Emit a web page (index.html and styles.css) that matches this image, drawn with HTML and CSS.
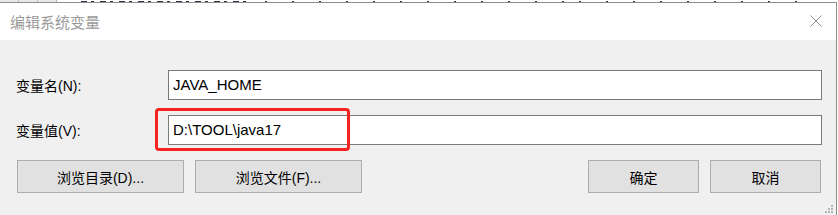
FILE: index.html
```
<!doctype html>
<html lang="zh-CN">
<head>
<meta charset="utf-8">
<title>编辑系统变量</title>
<link rel="stylesheet" href="styles.css">
</head>
<body>
<!-- bottom edge of the window behind the dialog -->
<div class="behind">
  <span class="cell"></span><span class="cell"></span><span class="cell"></span>
  <span class="ink" style="width:170px"></span>
  <span class="dots" style="width:300px"></span>
  <span class="dots" style="width:220px"></span>
</div>

<div class="dialog">
  <div class="titlebar">
    <span class="title">编辑系统变量</span>
    <svg class="close" width="12" height="12" viewBox="0 0 12 12">
      <path d="M0.5 0.5 L11.5 11.5 M11.5 0.5 L0.5 11.5" stroke="#8c8c8c" stroke-width="1" fill="none"/>
    </svg>
  </div>

  <div class="content">
    <div class="row">
      <label class="label">变量名(N):</label>
      <div class="field">JAVA_HOME</div>
    </div>
    <div class="row">
      <label class="label">变量值(V):</label>
      <div class="field">D:\TOOL\java17</div>
    </div>

    <div class="buttons">
      <div class="group">
        <button class="btn wide">浏览目录(D)...</button>
        <button class="btn wide">浏览文件(F)...</button>
      </div>
      <div class="group">
        <button class="btn">确定</button>
        <button class="btn">取消</button>
      </div>
    </div>

    <!-- annotation box around the value -->
    <div class="mark"></div>
    <div class="grip">
      <i style="right:2px;bottom:8px"></i>
      <i style="right:5px;bottom:5px"></i><i style="right:2px;bottom:5px"></i>
      <i style="right:8px;bottom:2px"></i><i style="right:5px;bottom:2px"></i><i style="right:2px;bottom:2px"></i>
    </div>
  </div>
</div>
</body>
</html>
```

FILE: styles.css
```
body {
  margin: 0;
  background: #ffffff;
  font-family: "Liberation Sans", "Noto Sans CJK SC", sans-serif;
  overflow: hidden;
}

.behind {
  height: 2px;
  overflow: hidden;
  display: flex;
  gap: 14px;
  background: #ffffff;
}
.behind .cell {
  width: 18px;
  height: 2px;
  margin-right: -14px;
  border-right: 1px solid #b8b8b8;
  background: #e9e9e9;
}
.behind .cell:nth-child(3) {
  margin-right: 10px;
}
.behind .ink {
  height: 1px;
  margin-top: 1px;
  background: repeating-linear-gradient(90deg, #2a3344 0 6px, #ffffff 6px 10px, #2a3344 10px 13px, #ffffff 13px 19px);
}
.behind .dots {
  height: 1px;
  margin-top: 1px;
  background: repeating-linear-gradient(90deg, #2a3344 0 2px, #ffffff 2px 27px);
}

.dialog {
  width: 836px;
  height: 212px;
  border-top: 1px solid #8e8e8e;
  border-right: 1px solid #8e8e8e;
  display: flex;
  flex-direction: column;
}

.titlebar {
  height: 37px;
  flex: none;
  background: #ffffff;
  display: flex;
  align-items: center;
  justify-content: space-between;
  padding: 0 14px 0 10px;
}
.title {
  font-family: "Noto Sans CJK SC", sans-serif;
  font-size: 15px;
  color: #9a9a9a;
  margin-top: -1px;
}
.close {
  margin-top: -1px;
}

.content {
  position: relative;
  flex: 1;
  background: #f0f0f0;
  padding: 30px 14px 0 16px;
}

.row {
  display: flex;
  align-items: center;
  margin-bottom: 15px;
}
.label {
  width: 152px;
  font-family: "Liberation Sans", "Noto Sans CJK SC", sans-serif;
  font-size: 14px;
  color: #000000;
}
.field {
  flex: 1;
  height: 28px;
  border: 1px solid #7a7a7a;
  background: #ffffff;
  font-size: 15px;
  line-height: 28px;
  padding-left: 4px;
  color: #000000;
}

.buttons {
  display: flex;
  justify-content: space-between;
  margin-top: 6px;
  padding-left: 1px;
  padding-right: 1px;
}
.group {
  display: flex;
  gap: 11px;
}
.btn {
  width: 111px;
  height: 33px;
  border: 1px solid #adadad;
  background: #e1e1e1;
  font-family: "Liberation Sans", "Noto Sans CJK SC", sans-serif;
  font-size: 14px;
  color: #000000;
  padding: 0;
}
.btn.wide {
  width: 167px;
}

.mark {
  position: absolute;
  left: 155px;
  top: 68px;
  width: 189px;
  height: 37px;
  border: 3px solid #f52222;
  border-radius: 4px;
}

.grip {
  position: absolute;
  right: 1px;
  bottom: 0;
  width: 12px;
  height: 12px;
}
.grip i {
  position: absolute;
  width: 2px;
  height: 2px;
  background: #b4b4b4;
}
```
